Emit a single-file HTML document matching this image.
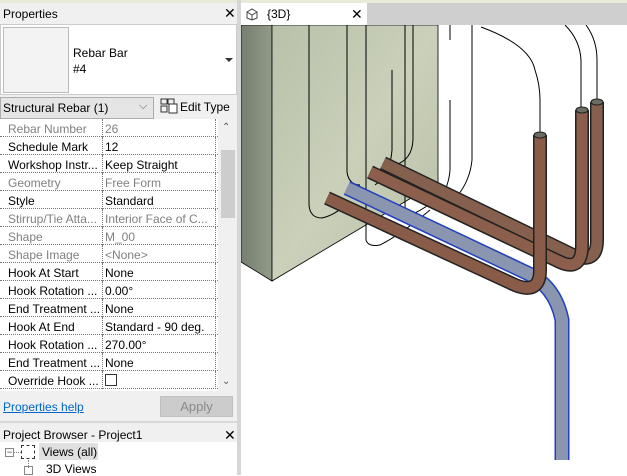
<!DOCTYPE html>
<html><head><style>
*{margin:0;padding:0;box-sizing:border-box}
body{width:627px;height:475px;overflow:hidden;background:#fff;font-family:"Liberation Sans",sans-serif;font-size:12px;color:#000;position:relative}
.a{position:absolute}
.row{position:absolute;left:0;width:218px;height:18px;border-bottom:1px dotted #777}
.row span{position:absolute;top:3px;white-space:nowrap;overflow:hidden}
.row .k{left:8px;width:94px}
.row .v{left:105px;width:110px}
.row .sep{position:absolute;left:102px;top:0;height:18px;border-left:1px dotted #777}
.row .sep2{position:absolute;left:215px;top:0;height:18px;border-left:1px dotted #777}
.g{color:#808080}
</style></head><body>
<div class="a" style="left:0;top:0;width:237px;height:475px;background:#f0f0f0"></div>
<div class="a" style="left:0;top:0;width:237px;height:3px;background:#e6ecd8"></div>
<div class="a" style="left:3px;top:7px;font-size:12px">Properties</div>
<div class="a" style="left:224px;top:5px;font-size:14px">✕</div>
<div class="a" style="left:0;top:24px;width:237px;height:71px;background:#fff;border:1px solid #ccc"></div>
<div class="a" style="left:3px;top:27px;width:66px;height:66px;background:#f3f3f3;border:1px solid #bbb"></div>
<div class="a" style="left:73px;top:46px">Rebar Bar</div>
<div class="a" style="left:73px;top:62px">#4</div>
<div class="a" style="left:225px;top:58px;width:0;height:0;border-left:4px solid transparent;border-right:4px solid transparent;border-top:4px solid #333"></div>
<div class="a" style="left:0;top:97px;width:154px;height:22px;background:#e5e5e5;border:1px solid #adadad"></div>
<div class="a" style="left:3px;top:101px">Structural Rebar (1)</div>
<div class="a" style="left:139px;top:100px;color:#555;font-size:11px">⌵</div>
<svg class="a" style="left:160px;top:97px" width="18" height="18"><rect x="1" y="2" width="6" height="5" fill="none" stroke="#333"/><rect x="1" y="9" width="6" height="6" fill="none" stroke="#333"/><rect x="8" y="2" width="6" height="5" fill="none" stroke="#333"/><rect x="9" y="7" width="8" height="9" fill="#fff" stroke="#333"/></svg>
<div class="a" style="left:180px;top:100px">Edit Type</div>
<div class="a" style="left:0;top:119px;width:218px;height:272px;background:#fff"></div>
<div class="row" style="top:119px"><span class="k g">Rebar Number</span><i class="sep"></i><span class="v g">26</span><i class="sep2"></i></div>
<div class="row" style="top:137px"><span class="k">Schedule Mark</span><i class="sep"></i><span class="v">12</span><i class="sep2"></i></div>
<div class="row" style="top:155px"><span class="k">Workshop Instr...</span><i class="sep"></i><span class="v">Keep Straight</span><i class="sep2"></i></div>
<div class="row" style="top:173px"><span class="k g">Geometry</span><i class="sep"></i><span class="v g">Free Form</span><i class="sep2"></i></div>
<div class="row" style="top:191px"><span class="k">Style</span><i class="sep"></i><span class="v">Standard</span><i class="sep2"></i></div>
<div class="row" style="top:209px"><span class="k g">Stirrup/Tie Atta...</span><i class="sep"></i><span class="v g">Interior Face of C...</span><i class="sep2"></i></div>
<div class="row" style="top:227px"><span class="k g">Shape</span><i class="sep"></i><span class="v g">M_00</span><i class="sep2"></i></div>
<div class="row" style="top:245px"><span class="k g">Shape Image</span><i class="sep"></i><span class="v g">&lt;None&gt;</span><i class="sep2"></i></div>
<div class="row" style="top:263px"><span class="k">Hook At Start</span><i class="sep"></i><span class="v">None</span><i class="sep2"></i></div>
<div class="row" style="top:281px"><span class="k">Hook Rotation ...</span><i class="sep"></i><span class="v">0.00°</span><i class="sep2"></i></div>
<div class="row" style="top:299px"><span class="k">End Treatment ...</span><i class="sep"></i><span class="v">None</span><i class="sep2"></i></div>
<div class="row" style="top:317px"><span class="k">Hook At End</span><i class="sep"></i><span class="v">Standard - 90 deg.</span><i class="sep2"></i></div>
<div class="row" style="top:335px"><span class="k">Hook Rotation ...</span><i class="sep"></i><span class="v">270.00°</span><i class="sep2"></i></div>
<div class="row" style="top:353px"><span class="k">End Treatment ...</span><i class="sep"></i><span class="v">None</span><i class="sep2"></i></div>
<div class="row" style="top:371px"><span class="k">Override Hook ...</span><i class="sep"></i><span class="v"><i style="display:inline-block;width:12px;height:12px;border:1px solid #333;margin-top:0px"></i></span><i class="sep2"></i></div>
<div class="a" style="left:218px;top:119px;width:19px;height:272px;background:#f0f0f0"></div>
<div class="a" style="left:221px;top:150px;width:14px;height:68px;background:#cdcdcd"></div>
<div class="a" style="left:222px;top:122px;color:#555;font-size:10px">⌃</div>
<div class="a" style="left:222px;top:376px;color:#555;font-size:10px">⌄</div>
<div class="a" style="left:3px;top:400px;color:#0066cc;text-decoration:underline">Properties help</div>
<div class="a" style="left:160px;top:396px;width:73px;height:21px;background:#ccc;border:1px solid #bfbfbf;color:#8a8a8a;text-align:center;line-height:19px;font-size:13px">Apply</div>
<div class="a" style="left:0;top:421px;width:237px;height:2px;background:#d8d8d8"></div>
<div class="a" style="left:3px;top:428px">Project Browser - Project1</div>
<div class="a" style="left:224px;top:427px;font-size:14px">✕</div>
<div class="a" style="left:0;top:442px;width:237px;height:33px;background:#fff"></div>
<div class="a" style="left:5px;top:448px;width:9px;height:9px;border:1px solid #888;font-size:9px;line-height:6px;text-align:center;color:#333">−</div>
<div class="a" style="left:14px;top:452px;width:7px;border-top:1px dotted #888"></div>
<div class="a" style="left:21px;top:445px;width:14px;height:14px;border:1px dashed #333"></div>
<div class="a" style="left:39px;top:443px;width:59px;height:17px;background:#e0e0e0"></div>
<div class="a" style="left:42px;top:445px">Views (all)</div>
<div class="a" style="left:28px;top:460px;height:8px;border-left:1px dotted #888"></div>
<div class="a" style="left:24px;top:466px;width:9px;height:9px;border:1px solid #888"></div>
<div class="a" style="left:46px;top:462px">3D Views</div>
<div class="a" style="left:237px;top:0;width:4px;height:475px;background:#d6d6d6"></div>
<div class="a" style="left:241px;top:0;width:386px;height:25px;background:#cfcfcf"></div>
<div class="a" style="left:241px;top:0;width:386px;height:3px;background:#e6ecd8"></div>
<div class="a" style="left:241px;top:3px;width:126px;height:22px;background:#fff"></div>
<svg class="a" style="left:245px;top:7px" width="14" height="14"><path d="M2 5 L7 2 L12 5 L12 11 L7 13 L2 11 Z M2 5 L7 8 L12 5 M7 8 L7 13" fill="none" stroke="#444"/></svg>
<div class="a" style="left:267px;top:7px">{3D}</div>
<div class="a" style="left:351px;top:6px;font-size:14px">✕</div>
<svg class="a" style="left:241px;top:25px" width="386" height="450" viewBox="241 25 386 450">
<defs>
<linearGradient id="cf" x1="0" y1="0" x2="1" y2="1"><stop offset="0" stop-color="#b9c1aa"/><stop offset="0.5" stop-color="#cad0b9"/><stop offset="1" stop-color="#b8bfa6"/></linearGradient>
<linearGradient id="cs" x1="0" x2="1"><stop offset="0" stop-color="#767f70"/><stop offset="1" stop-color="#929a88"/></linearGradient>
</defs>
<polygon points="241,25 272,25 272,281 241,262" fill="url(#cs)" stroke="#000" stroke-width="0.8"/>
<polygon points="272,25 438,25 438,182 272,281" fill="url(#cf)" stroke="#000" stroke-width="0.8"/>
<g fill="none" stroke="#000" stroke-width="1">
<path d="M309 25 V205 Q310 218 322 218 Q335 215 345 205"/>
<path d="M347 25 V172 Q349 185 360 185"/>
<path d="M366 25 V240 Q368 247 380 245 Q400 235 430 210"/>
<path d="M392 70 V150 Q390 175 375 185"/>
<path d="M405 25 V205 Q405 215 415 213 Q425 208 435 200"/>
<path d="M413 25 V140 Q412 160 395 165"/>
<path d="M450 25 V40 M450 100 V170 Q449 185 440 200"/>
<path d="M472 25 V160 Q470 180 458 195"/>
<path d="M481 27 Q530 45 535 70 Q540 85 540 100 V135"/>
<path d="M565 25 Q580 40 581 60 V110"/>
<path d="M586 25 Q597 40 597 60 V102"/>
</g>
<g fill="none" stroke-linecap="butt">
<path d="M383 163 L573 255 Q597 265 597 240 V102" stroke="#222" stroke-width="14"/>
<path d="M383 163 L573 255 Q597 265 597 240 V102" stroke="#85604f" stroke-width="11"/>
<path d="M370 172 L560 262 Q582 272 582 245 V110" stroke="#222" stroke-width="14"/>
<path d="M370 172 L560 262 Q582 272 582 245 V110" stroke="#8b5f4b" stroke-width="11"/>
<path d="M347 188 L525 272 Q555 285 562 320 V460" stroke="#2040c0" stroke-width="15"/>
<path d="M347 188 L525 272 Q555 285 562 320 V460" stroke="#8a95b0" stroke-width="12"/>
<path d="M327 198 L515 285 Q540 295 540 270 V135" stroke="#222" stroke-width="14"/>
<path d="M327 198 L515 285 Q540 295 540 270 V135" stroke="#885c49" stroke-width="11"/>
</g>
<ellipse cx="540" cy="135" rx="6" ry="3" fill="#6b6b62" stroke="#222"/>
<ellipse cx="582" cy="110" rx="6" ry="3" fill="#6b6b62" stroke="#222"/>
<ellipse cx="597" cy="102" rx="6" ry="3" fill="#6b6b62" stroke="#222"/>
</svg>
</body></html>
